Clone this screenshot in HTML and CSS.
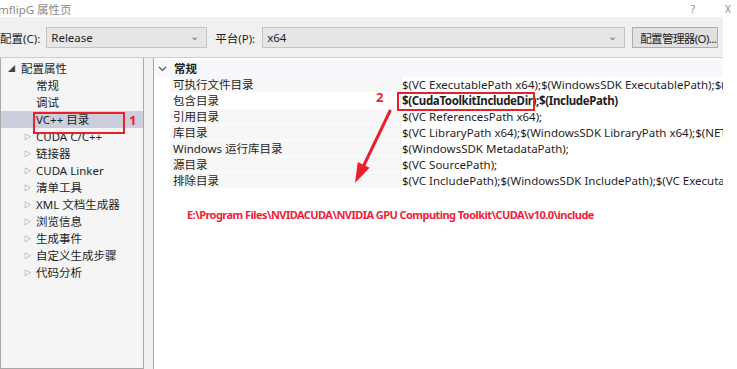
FILE: index.html
```html
<!DOCTYPE html>
<html lang="zh-CN">

<head>
    <meta charset="UTF-8">
    <title>mflipG 属性页</title>
    <link rel="stylesheet" href="styles.css">
</head>

<body>
    <div class="window">
        <div class="titlebar">
            <span class="title">mflipG 属性页</span>
            <span class="help">?</span>
            <span class="close">X</span>
        </div>

        <div class="toolbar">
            <span class="label">配置(C):</span>
            <div class="select config">Release<span class="caret">&#8964;</span></div>
            <span class="label">平台(P):</span>
            <div class="select platform">x64<span class="caret">&#8964;</span></div>
            <div class="button">配置管理器(O)...</div>
        </div>

        <div class="main">
            <div class="tree">
                <div class="node root"><span class="open">&#9698;</span>配置属性</div>
                <div class="node leaf">常规</div>
                <div class="node leaf">调试</div>
                <div class="node leaf selected">VC++ 目录</div>
                <div class="node"><span class="closed">&#9655;</span>CUDA C/C++</div>
                <div class="node"><span class="closed">&#9655;</span>链接器</div>
                <div class="node"><span class="closed">&#9655;</span>CUDA Linker</div>
                <div class="node"><span class="closed">&#9655;</span>清单工具</div>
                <div class="node"><span class="closed">&#9655;</span>XML 文档生成器</div>
                <div class="node"><span class="closed">&#9655;</span>浏览信息</div>
                <div class="node"><span class="closed">&#9655;</span>生成事件</div>
                <div class="node"><span class="closed">&#9655;</span>自定义生成步骤</div>
                <div class="node"><span class="closed">&#9655;</span>代码分析</div>
            </div>

            <div class="grid">
                <div class="group">
                    <span class="chevron">
                        <svg width="9" height="6" viewBox="0 0 9 6"><path d="M1 1 L4.5 4.5 L8 1" fill="none" stroke="#555" stroke-width="1.2"/></svg>
                    </span>
                    常规
                </div>
                <div class="row"><span class="name">可执行文件目录</span><span class="value">$(VC ExecutablePath x64);$(WindowsSDK ExecutablePath);$(VS ExecutablePath)</span></div>
                <div class="row current"><span class="name">包含目录</span><span class="value bold">$(CudaToolkitIncludeDir);$(IncludePath)</span></div>
                <div class="row"><span class="name">引用目录</span><span class="value">$(VC ReferencesPath x64);</span></div>
                <div class="row"><span class="name">库目录</span><span class="value">$(VC LibraryPath x64);$(WindowsSDK LibraryPath x64);$(NETFXKitsDir)</span></div>
                <div class="row"><span class="name">Windows 运行库目录</span><span class="value">$(WindowsSDK MetadataPath);</span></div>
                <div class="row"><span class="name">源目录</span><span class="value">$(VC SourcePath);</span></div>
                <div class="row"><span class="name">排除目录</span><span class="value">$(VC IncludePath);$(WindowsSDK IncludePath);$(VC ExecutablePath x64)</span></div>
                <div class="path">E:\Program Files\NVIDACUDA\NVIDIA GPU Computing Toolkit\CUDA\v10.0\include</div>
            </div>
        </div>
    </div>

    <!-- annotations drawn over the screenshot -->
    <div class="mark box1"></div>
    <div class="mark-num num1">1</div>
    <div class="mark box2"></div>
    <div class="mark-num num2">2</div>
    <svg class="arrow" width="50" height="85" viewBox="0 0 50 85">
        <path d="M41 6 L15 60" stroke="#e8202a" stroke-width="3" stroke-linecap="round" fill="none"/>
        <path d="M6 78 L8.8 57 L20.6 62.8 Z" fill="#e8202a"/>
    </svg>
</body>

</html>
```

FILE: styles.css
```css
body {
    margin: 0;
    width: 737px;
    height: 369px;
    overflow: hidden;
    background-color: #fff;
    font-family: "Noto Sans", "Noto Sans CJK SC", sans-serif;
    font-size: 11.5px;
    color: #1e1e1e;
    position: relative;
}

.window {
    width: 723px;
    height: 369px;
    background-color: #f0f0f0;
    display: flex;
    flex-direction: column;
}

.titlebar {
    height: 17px;
    background-color: #fff;
    display: flex;
    align-items: center;
    color: #8a8a8a;
    width: 737px;
}

.title {
    margin-left: -2px;
    flex: 1;
}

.help {
    font-size: 10px;
    margin-right: 30px;
}

.close {
    font-size: 10px;
    width: 12px;
    overflow: hidden;
}

.toolbar {
    height: 40px;
    display: flex;
    align-items: center;
    gap: 7px;
    padding-top: 1px;
    box-sizing: border-box;
}

.label {
    white-space: nowrap;
}

.select {
    height: 21px;
    box-sizing: border-box;
    border: 1px solid #c4c4c4;
    background-color: #e6e6e6;
    display: flex;
    align-items: center;
    padding-left: 4px;
    position: relative;
    flex-shrink: 0;
}

.config {
    width: 161px;
    margin-left: -1px;
    margin-right: 1px;
}

.platform {
    width: 363px;
}

.caret {
    position: absolute;
    right: 7px;
    top: 0px;
    color: #777;
    font-size: 11px;
}

.button {
    height: 21px;
    box-sizing: border-box;
    border: 1px solid #adadad;
    background-color: #e1e1e1;
    display: flex;
    align-items: center;
    padding: 0 0 0 7px;
    white-space: nowrap;
    overflow: hidden;
    width: 86px;
    flex-shrink: 0;
    letter-spacing: -0.6px;
}

.main {
    flex: 1;
    display: flex;
    gap: 9px;
    border-top: 1px solid #cfcfcf;
    min-height: 0;
}

.tree {
    width: 144px;
    flex-shrink: 0;
    box-sizing: border-box;
    border: 1px solid #a9a9a9;
    border-top: none;
    background-color: #f5f5f5;
    padding-top: 2px;
}

.node {
    height: 17px;
    line-height: 17px;
    padding-left: 35px;
    position: relative;
    white-space: nowrap;
}

.root {
    padding-left: 20px;
}

.open {
    position: absolute;
    left: 7px;
    font-size: 7px;
    color: #444;
}

.closed {
    position: absolute;
    left: 23px;
    font-size: 7px;
    color: #555;
}

.selected {
    background-color: #cccedb;
}

.grid {
    flex: 1;
    min-width: 0;
    overflow: hidden;
    background-color: #fff;
    border-left: 1px solid #a9a9a9;
    padding-top: 2px;
}

.group {
    height: 17px;
    line-height: 17px;
    font-weight: bold;
    display: flex;
    align-items: center;
    padding-left: 4px;
    background-color: #f7f8fb;
}

.chevron {
    width: 16px;
    display: flex;
}

.row {
    height: 16px;
    line-height: 16px;
    display: flex;
    white-space: nowrap;
    margin-left: 16px;
}

.name {
    width: 227px;
    padding-left: 3px;
    flex-shrink: 0;
    background-color: #f7f7f7;
    box-shadow: inset 0 -1px 0 #fff;
}

.current .name {
    background-color: #fff;
}

.value {
    padding-left: 1px;
    overflow: hidden;
    border-left: 1px solid #f0f0f0;
    flex: 1;
}

.bold {
    font-weight: bold;
    letter-spacing: -0.35px;
}

.path {
    margin: 18px 0 0 33px;
    color: #f0213a;
    font-weight: bold;
    font-size: 11px;
    letter-spacing: -0.55px;
    white-space: nowrap;
}

.mark {
    position: absolute;
    border: 2px solid #e8202a;
    box-sizing: border-box;
}

.box1 {
    left: 33px;
    top: 112px;
    width: 92px;
    height: 22px;
}

.box2 {
    left: 397px;
    top: 92px;
    width: 138px;
    height: 19px;
}

.mark-num {
    position: absolute;
    color: #e8202a;
    font-weight: bold;
    font-size: 13px;
}

.num1 {
    left: 129px;
    top: 111px;
}

.num2 {
    left: 376px;
    top: 88px;
}

.arrow {
    position: absolute;
    left: 349px;
    top: 105px;
}
```
